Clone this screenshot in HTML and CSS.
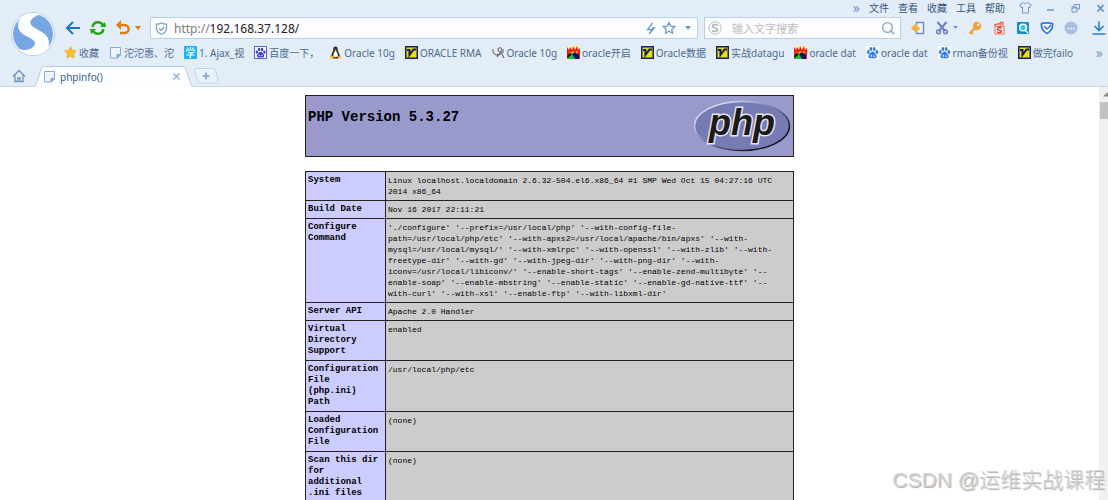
FILE: index.html
```html
<!DOCTYPE html>
<html lang="zh">
<head>
    <meta charset="UTF-8">
    <title>phpinfo()</title>
    <link rel="stylesheet" href="styles.css">
</head>
<body>
<svg class="defs" width="0" height="0">
    <symbol id="doc" viewBox="0 0 13 13">
        <path d="M1.500 1.500h10v7.500l-3 3h-7z" fill="#eef4ff" stroke="#86aae0"/>
        <path d="M11.500 8.500h-3.500v3.500z" fill="#86aae0" stroke="#86aae0"/>
    </symbol>
    <symbol id="itv" viewBox="0 0 13 13">
        <path d="M0 0h13v13H0z" fill="#1b1b7a"/>
        <path d="M1.500 1.500h10v10h-10z" fill="#e3e30b"/>
        <path d="M2 4h2.500v5L8.500 3.500H11" fill="none" stroke="#1b1b5a" stroke-width="2"/>
    </symbol>
    <symbol id="flame" viewBox="0 0 13 13">
        <path d="M0 0h13v13H0z" fill="#fff3a0"/>
        <path d="M0 13V1l2 3 1-3 2 3 1-4 2 4 2-4 1 4 2-2v11z" fill="#f41a0c"/>
        <path d="M1 5l3 2 2-2 2 1 3-1-1 3H4z" fill="#ffd21c"/>
        <path d="M5 13V8l3-2 4 3v4z" fill="#10107a"/>
        <path d="M0 13l2-4 3-1 3 5z" fill="#18c52c"/>
        <path d="M0 10l3-3 2 1-4 4z" fill="#111"/>
    </symbol>
    <symbol id="paw" viewBox="0 0 13 13">
        <ellipse cx="2.300" cy="6" rx="1.400" ry="1.900"/>
        <ellipse cx="4.900" cy="2.900" rx="1.400" ry="2"/>
        <ellipse cx="8.300" cy="2.900" rx="1.400" ry="2"/>
        <ellipse cx="10.900" cy="6" rx="1.400" ry="1.900"/>
        <path d="M6.600 5.600c1.500 0 2 1.600 3.200 2.700 2 1.800.8 4.200-1.300 4-1.300-.2-2.500-.2-3.800 0-2.200.2-3.300-2.200-1.300-4C4.600 7.200 5.100 5.600 6.600 5.600z"/>
        <path d="M5.500 8.500v2h-1v-1h1M7.300 9v1.500h1.500V9" fill="none" stroke="#fff" stroke-width=".6"/>
    </symbol>
</svg>

<header class="browser">
    <div class="top">
        <svg class="logo" viewBox="0 0 46 46">
            <circle cx="23" cy="23" r="21.500" fill="#fff" stroke="#b9cee8"/>
            <circle cx="23" cy="23" r="20" fill="#76a7e4"/>
            <path d="M31 3C18 0 8 5 8 14c0 7 6 10 12 13 6 3 6 6 3 9-3 3-9 4-14 2 4 4 9 6 14 6 10 0 16-5 16-12 0-8-7-11-14-15-5-3-6-6-3-9 2-2 5-4 9-5z" fill="#fff"/>
        </svg>
        <div class="bars">
            <nav class="menu">
                <a href="#" class="more">»</a>
                <a href="#">文件</a>
                <a href="#">查看</a>
                <a href="#">收藏</a>
                <a href="#">工具</a>
                <a href="#">帮助</a>
                <div class="window">
                    <button aria-label="皮肤"><svg viewBox="0 0 13 13"><path d="M4.500 1.500L1 3.500l1 3 1.500-.5v6h6V6l1.500.5 1-3-3.500-2c-1 1.500-3 1.500-4 0z" fill="none" stroke="#7196bf"/></svg></button>
                    <button aria-label="最小化"><svg viewBox="0 0 13 13"><path d="M3 9h7" stroke="#7196bf" stroke-width="1.500"/></svg></button>
                    <button aria-label="还原"><svg viewBox="0 0 13 13"><path d="M3 6h5v5H3zM5 6V3.500h5.500V8H8M3 7h5" fill="none" stroke="#7196bf"/></svg></button>
                    <button aria-label="关闭"><svg viewBox="0 0 13 13"><path d="M3.500 4l6 6.500m0-6.500l-6 6.500" stroke="#5f86b3" stroke-width="1.500"/></svg></button>
                </div>
            </nav>
            <div class="address-row">
                <div class="nav-buttons">
                    <button aria-label="后退"><svg viewBox="0 0 16 16"><path d="M15 8H2.500M8 2L2 8l6 6" fill="none" stroke="#2274c0" stroke-width="2"/></svg></button>
                    <button aria-label="刷新"><svg viewBox="0 0 16 16"><path d="M2.500 7c.5-3 3-4.700 5.500-4.700 2 0 4 1 5 3M13.500 9c-.5 3-3 4.700-5.500 4.700-2 0-4-1-5-3" fill="none" stroke="#24a30f" stroke-width="2.400"/><path d="M10 7h6l-1-5zM6 9H0l1 5z" fill="#24a30f"/></svg></button>
                    <button aria-label="撤销"><svg viewBox="0 0 16 16"><path d="M3 5h6.500c5.500 0 5.500 8 0 8H5" fill="none" stroke="#e27b0a" stroke-width="2.400"/><path d="M1 5l5-5v10z" fill="#e27b0a"/></svg></button>
                    <svg class="caret" viewBox="0 0 6 4"><path d="M0 0h6L3 4z" fill="#e27b0a"/></svg>
                </div>
                <div class="address">
                    <svg class="shield" viewBox="0 0 13 13"><path d="M6.500 1C8 2 10 2.200 11.500 2.200v4.300c0 3-2.500 4.800-5 5.800-2.500-1-5-2.800-5-5.800V2.200C3 2.200 5 2 6.500 1z" fill="none" stroke="#7d9fca" stroke-width="1.200"/><path d="M4 6.300l2 2L9.200 5" fill="none" stroke="#6b92c4" stroke-width="1.200"/></svg>
                    <label for="url">http://</label>
                    <input id="url" type="text" value="192.168.37.128/">
                    <button aria-label="极速"><svg viewBox="0 0 13 13"><path d="M8.500 1L3.500 7.500h5L5 12M8 6h2.500L5 12" fill="none" stroke="#6f99ce" stroke-width="1.300"/></svg></button>
                    <button class="star" aria-label="加入收藏"><svg viewBox="0 0 14 14"><path d="M7 1.500l1.700 3.600 4 .5-2.900 2.700.7 4L7 10.300l-3.500 2 .7-4L1.300 5.600l4-.5z" fill="none" stroke="#6f99ce" stroke-width="1.300"/></svg></button>
                    <svg class="caret" viewBox="0 0 6 4"><path d="M0 0h6L3 4z" fill="#6f99ce"/></svg>
                </div>
                <div class="search">
                    <svg viewBox="0 0 14 14"><circle cx="7" cy="7" r="6.200" fill="none" stroke="#bcbcbc"/><path d="M9.800 4.200C7.500 3 4.500 3.500 4.500 5.200c0 2 5 1.600 5 3.600 0 1.800-3 2-5.300.8" fill="none" stroke="#b5b5b5" stroke-width="1.800"/></svg>
                    <input type="text" placeholder="输入文字搜索" aria-label="搜索">
                    <button aria-label="搜索"><svg viewBox="0 0 13 13"><circle cx="6" cy="6" r="4.500" fill="none" stroke="#8aa8cd" stroke-width="1.300"/><path d="M9.300 9.300l2.700 3" stroke="#8aa8cd" stroke-width="1.500"/></svg></button>
                </div>
                <div class="tools">
                    <button aria-label="手机"><svg viewBox="0 0 14 14"><path d="M5.500 1.500h7v11h-7z" fill="#eef4fc" stroke="#6e8fbf" stroke-width="1.500"/><path d="M3 4l3-1v3h2.500v3H6v3L0 7.500z" fill="#f6b13c"/></svg></button>
                    <button class="cut" aria-label="截图"><svg viewBox="0 0 14 14"><path d="M2.500 1l7.500 9M11.500 1L4 10" stroke="#6c7fc4" stroke-width="2"/><circle cx="3.500" cy="10.800" r="1.900" fill="none" stroke="#6c7fc4" stroke-width="1.500"/><circle cx="10.500" cy="10.800" r="1.900" fill="none" stroke="#6c7fc4" stroke-width="1.500"/></svg><svg class="caret" viewBox="0 0 6 4"><path d="M1 0h5L3.500 3z" fill="#6f99ce"/></svg></button>
                    <button aria-label="密码"><svg viewBox="0 0 14 14"><path d="M7 7l-5.500 5.500M3 11l2 2" stroke="#f0a23a" stroke-width="2.400"/><circle cx="9" cy="5" r="4.200" fill="#f0a23a"/><circle cx="10.300" cy="3.800" r="1.200" fill="#fff"/></svg></button>
                    <button aria-label="购物"><svg viewBox="0 0 14 14"><path d="M3 5.500h9v7.500H3z" fill="#fff" stroke="#f36450"/><path d="M2 4l6-1.500M8.500 4.500V1.500h2.500v3" fill="none" stroke="#f36450" stroke-width="1.400"/><path d="M9.500 7C7 6 5.500 6.500 5.500 8s4 1 4 2.500c0 1.300-2.500 1.300-4.500.5" fill="none" stroke="#ea3a28" stroke-width="1.400"/></svg></button>
                    <button aria-label="识图"><svg viewBox="0 0 14 14"><rect x="1" y="1" width="12" height="12" rx="1" fill="#148ed0"/><circle cx="7" cy="6.500" r="3.300" fill="#39c0ee" stroke="#fff" stroke-width="1.500"/><path d="M9 9l3 3" stroke="#fff" stroke-width="1.500"/></svg></button>
                    <button aria-label="安全"><svg viewBox="0 0 14 14"><path d="M1.500 2.500c4-1 7-1 11 0 .5 5-2 8-5.500 10-3.500-2-6-5-5.500-10z" fill="#fff" stroke="#2876ee" stroke-width="1.700"/><path d="M4 5l3 3 4-4" fill="none" stroke="#2876ee" stroke-width="1.500"/></svg></button>
                    <button aria-label="更多"><svg viewBox="0 0 14 14"><circle cx="7" cy="7" r="6.500" fill="#a5bfe0"/><path d="M3.500 7.500H5m1.300 0h1.500m1.200 0h1.500" stroke="#fff" stroke-width="1.400"/></svg></button>
                    <button class="download" aria-label="下载"><svg viewBox="0 0 14 14"><path d="M7 .500V9M2.500 5L7 9.500 11.500 5M.500 13h13" fill="none" stroke="#2a80cc" stroke-width="1.600"/></svg></button>
                </div>
            </div>
            <nav class="bookmarks">
                <a href="#"><svg viewBox="0 0 13 13"><path d="M6.500.800l1.800 3.700 4 .5-3 2.900.8 4.100-3.600-2L2.900 12l.8-4.100L.700 5l4-.5z" fill="#fcc22c" stroke="#e9a11b" stroke-width=".8"/></svg>收藏</a>
                <a href="#"><svg><use href="#doc"/></svg>沱沱惠、沱</a>
                <a href="#"><svg viewBox="0 0 13 13"><path d="M0 0h13v13H0z" fill="#1cb5f5"/><path d="M2.500 5.500V4h8v1.500M3.500 1.500l1 1.500M6.500 1v2M9.500 1.500l-1 1.500M4 6.500h5L6.500 8v3.500H5M2.500 9h8" fill="none" stroke="#fff" stroke-width="1.100"/></svg>1. Ajax_视</a>
                <a href="#"><svg class="boxed" viewBox="-1 -1 15 15"><path d="M-.5-.5h14v14h-14z" fill="#fff" stroke="#3336d6"/><use href="#paw" width="13" height="13"/></svg>百度一下，</a>
                <a href="#"><svg viewBox="0 0 13 13"><path d="M6.500.500c2 0 2.300 1.500 2.300 3.500 0 2 2 3.500 2 6l-2 2.500H4L2.200 10c0-2.500 2-4 2-6 0-2 .3-3.500 2.300-3.500z" fill="#2b2b2b"/><path d="M6.500 4.500c1.500 1.500 2.500 3.500 2.300 5.500-.3 1.500-4 1.500-4.500 0-.3-2 1.200-4 2.200-5.500z" fill="#fff"/><path d="M1.200 9.500l3 .5.800 2-1 1-3-1zM8.500 10.500l3-1 .8 2-2.800 1.500zM5 3.500h3L6.500 5z" fill="#f5b81b"/></svg>Oracle 10g</a>
                <a href="#"><svg><use href="#itv"/></svg>ORACLE RMA</a>
                <a href="#"><svg viewBox="0 0 13 13"><path d="M1 3c-1 5 4 8 7 4 3-4 1-6-1-5s-1 4 2 4l3 6M9 8c-2 0-3 1-4 3M11 3v4" fill="none" stroke="#666" stroke-width="1.100"/></svg>Oracle 10g</a>
                <a href="#"><svg><use href="#flame"/></svg>oracle开启</a>
                <a href="#"><svg><use href="#itv"/></svg>Oracle数据</a>
                <a href="#"><svg><use href="#itv"/></svg>实战datagu</a>
                <a href="#"><svg><use href="#flame"/></svg>oracle dat</a>
                <a href="#"><svg class="paw"><use href="#paw"/></svg>oracle dat</a>
                <a href="#"><svg class="paw"><use href="#paw"/></svg>rman备份视</a>
                <a href="#"><svg><use href="#itv"/></svg>做完failo</a>
                <a href="#" class="more">»</a>
            </nav>
        </div>
    </div>
    <div class="tabs">
        <button class="home" aria-label="主页"><svg viewBox="0 0 14 14"><path d="M1 7.500L7 1.500l6 6M3 6.500v6h3V9h2v3.500h3v-6" fill="none" stroke="#6b8fbd" stroke-width="1.300"/></svg></button>
        <div class="tab">
            <svg class="shape" viewBox="0 0 160 21" preserveAspectRatio="none"><path d="M0 20.500c3 0 3-2 4-5L8 3.500C9 1 10 .500 12 .500h137c2 0 3 .5 4 3l4 12c1 3 1 5 3 5V21H0z" fill="#fcfdff"/><path d="M0 20.500c3 0 3-2 4-5L8 3.500C9 1 10 .500 12 .500h137c2 0 3 .5 4 3l4 12c1 3 1 5 3 5" fill="none" stroke="#b4cae4"/></svg>
            <svg class="icon"><use href="#doc"/></svg>
            <span>phpinfo()</span>
            <button aria-label="关闭标签"><svg viewBox="0 0 9 9"><path d="M1.500 1.500l6 6m0-6l-6 6" stroke="#8fb0d8" stroke-width="1.400"/></svg></button>
        </div>
        <button class="add" aria-label="新标签"><svg viewBox="0 0 26 16"><path d="M3.500.500h16c2 0 2.500 1 3 2.500l2.500 9c.5 2 0 3-2 3H8c-2 0-3-.5-3.500-2.500L1.500 3c-.5-1.500 0-2.500 2-2.500z" fill="#e9f1fa" stroke="#c0d2e8"/><path d="M9.500 8h7M13 4.500v7" stroke="#7e9fc9" stroke-width="1.600"/></svg></button>
    </div>
</header>

<div class="view">
    <main class="content">
        <div class="head">
            <h1>PHP Version 5.3.27</h1>
            <svg class="php" viewBox="0 0 98 52">
                <defs>
                    <linearGradient id="rim" x1="0" y1="0" x2="1" y2="1">
                        <stop offset="0.200" stop-color="#d5d6ee"/>
                        <stop offset="0.500" stop-color="#6c70a8"/>
                        <stop offset="0.800" stop-color="#15151f"/>
                    </linearGradient>
                </defs>
                <ellipse cx="49" cy="26" rx="47.500" ry="24.500" fill="#777bb3" stroke="url(#rim)" stroke-width="1.500"/>
                <text x="16" y="35">php</text>
            </svg>
        </div>
        <table>
            <tr><th>System</th><td>Linux localhost.localdomain 2.6.32-504.el6.x86_64 #1 SMP Wed Oct 15 04:27:16 UTC<br>2014 x86_64</td></tr>
            <tr><th>Build Date</th><td>Nov 16 2017 22:11:21</td></tr>
            <tr><th>Configure<br>Command</th><td>'./configure' '--prefix=/usr/local/php' '--with-config-file-<br>path=/usr/local/php/etc' '--with-apxs2=/usr/local/apache/bin/apxs' '--with-<br>mysql=/usr/local/mysql/' '--with-xmlrpc' '--with-openssl' '--with-zlib' '--with-<br>freetype-dir' '--with-gd' '--with-jpeg-dir' '--with-png-dir' '--with-<br>iconv=/usr/local/libiconv/' '--enable-short-tags' '--enable-zend-multibyte' '--<br>enable-soap' '--enable-mbstring' '--enable-static' '--enable-gd-native-ttf' '--<br>with-curl' '--with-xsl' '--enable-ftp' '--with-libxml-dir'</td></tr>
            <tr><th>Server API</th><td>Apache 2.0 Handler</td></tr>
            <tr><th>Virtual<br>Directory<br>Support</th><td>enabled</td></tr>
            <tr><th>Configuration<br>File<br>(php.ini)<br>Path</th><td>/usr/local/php/etc</td></tr>
            <tr><th>Loaded<br>Configuration<br>File</th><td>(none)</td></tr>
            <tr><th>Scan this dir<br>for<br>additional<br>.ini files</th><td>(none)</td></tr>
        </table>
    </main>
    <div class="scrollbar">
        <svg viewBox="0 0 9 14"><path d="M3 9h6V6L7 5z" fill="#8a8a8a"/></svg>
        <div class="thumb"></div>
    </div>
</div>
<div class="watermark">CSDN @运维实战课程</div>
</body>
</html>
```
FILE: styles.css
```css
* {
    margin: 0;
    padding: 0;
    box-sizing: border-box;
}

body {
    height: 100vh;
    display: flex;
    flex-direction: column;
    overflow: hidden;
    background: #fff;
    font-family: "Noto Sans", "Noto Sans CJK SC", sans-serif;
    font-size: 10px;
    color: #4b6a8e;
}

a {
    color: inherit;
    text-decoration: none;
}

button {
    display: flex;
    align-items: center;
    border: none;
    background: none;
}

svg {
    display: block;
    flex: none;
}

input {
    min-width: 0;
    flex: 1;
    border: none;
    outline: none;
    background: none;
    font-family: inherit;
}

.defs {
    position: absolute;
}

/* browser chrome */
.browser {
    flex: none;
    background: #e3edf8;
    border-bottom: 1px solid #c4d7ec;
}

.top {
    display: flex;
    height: 66px;
}

.logo {
    width: 46px;
    height: 46px;
    margin: 11px 8px 0 10px;
}

.bars {
    flex: 1;
    min-width: 0;
}

.menu {
    display: flex;
    justify-content: flex-end;
    align-items: center;
    gap: 9px;
    height: 15px;
    padding-right: 1px;
    color: #35557a;
}

.more {
    color: #7196bf;
    font-size: 14px;
    line-height: 14px;
}

.window {
    display: flex;
    gap: 12px;
    margin-left: 5px;
}

.window svg {
    width: 13px;
    height: 13px;
}

.address-row {
    display: flex;
    height: 22px;
    margin-top: 2px;
}

.nav-buttons {
    display: flex;
    align-items: center;
    gap: 9px;
    width: 86px;
    padding-left: 1px;
}

.nav-buttons svg {
    width: 16px;
    height: 16px;
}

.address,
.search {
    display: flex;
    align-items: center;
    background: #fcfdff;
    border: 1px solid #b9d0e8;
}

.address {
    flex: 1;
    padding: 0 6px 0 4px;
    margin-right: 6px;
    font-size: 12px;
}

.address svg {
    width: 13px;
    height: 13px;
}

.address label {
    margin-left: 6px;
    color: #7c7c7c;
}

.address input {
    font-size: 12px;
    color: #222;
}

.address .star {
    margin: 0 9px 0 5px;
}

.address .star svg {
    width: 14px;
    height: 14px;
}

.search {
    width: 197px;
    padding: 0 5px 0 3px;
}

.search svg {
    width: 14px;
    height: 14px;
}

.search input {
    margin-left: 10px;
    font-size: 11px;
}

.search input::placeholder {
    color: #bcbcbc;
}

.tools {
    display: flex;
    align-items: center;
    gap: 10px;
    padding: 0 2px 0 10px;
}

.tools svg {
    width: 14px;
    height: 14px;
}

.tools .cut {
    gap: 3px;
}

.tools .download {
    margin-left: 4px;
}

.address-row .caret {
    width: 6px;
    height: 4px;
}

.nav-buttons .caret {
    margin-left: -5px;
}

.bookmarks {
    display: flex;
    align-items: center;
    gap: 10px;
    height: 27px;
    padding-right: 5px;
    white-space: nowrap;
}

.bookmarks a {
    display: flex;
    align-items: center;
    gap: 2px;
}

.bookmarks svg {
    width: 13px;
    height: 13px;
}

.bookmarks .boxed {
    fill: #3336d6;
}

.bookmarks .paw {
    fill: #2a78ee;
    background: #fff;
}

.bookmarks .more {
    margin-left: auto;
}

/* tab strip */
.tabs {
    display: flex;
    height: 20px;
}

.home {
    width: 33px;
    padding-left: 12px;
}

.home svg {
    width: 14px;
    height: 14px;
}

.tab {
    position: relative;
    display: flex;
    align-items: center;
    width: 160px;
    height: 21px;
    padding: 0 12px 0 10px;
    color: #35638f;
}

.tab > * {
    position: relative;
}

.tab .shape {
    position: absolute;
    left: 0;
    top: 0;
    width: 100%;
    height: 100%;
}

.tab .icon {
    width: 13px;
    height: 13px;
    margin-right: 4px;
}

.tab span {
    flex: 1;
}

.tab button svg {
    width: 9px;
    height: 9px;
}

.add svg {
    width: 26px;
    height: 16px;
}

/* page */
.view {
    flex: 1;
    min-height: 0;
    display: flex;
}

.content {
    flex: 1;
    padding-top: 8px;
    overflow: hidden;
    color: #000;
    font-family: "Liberation Mono", "Noto Sans CJK SC", monospace;
}

.head {
    display: flex;
    justify-content: space-between;
    width: 489px;
    height: 62px;
    margin: 0 auto 14px;
    padding: 4px 2px 0;
    background: #9999cc;
    border: 1px solid #222;
}

.head h1 {
    padding-top: 9px;
    font-size: 14px;
    line-height: 16px;
}

.php {
    width: 98px;
    height: 52px;
}

.php text {
    font: italic bold 36px "Liberation Sans", sans-serif;
    fill: #1c1a1b;
    stroke: #e6e6ee;
    stroke-width: 3px;
    paint-order: stroke;
}

table {
    width: 489px;
    margin: 0 auto;
    border-collapse: collapse;
    table-layout: fixed;
    white-space: nowrap;
}

th,
td {
    padding: 3px 2px;
    border: 1px solid #222;
    font-size: 8px;
    line-height: 11px;
    text-align: left;
    vertical-align: top;
}

th {
    width: 80px;
    background: #ccccff;
    font-size: 9px;
}

td {
    background: #cccccc;
}

.scrollbar {
    width: 9px;
    padding-left: 1px;
    background: #f0f0f0;
}

.scrollbar svg {
    width: 9px;
    height: 15px;
}

.thumb {
    height: 17px;
    background: #c1c1c1;
}

.watermark {
    position: absolute;
    right: 3px;
    bottom: 6px;
    color: #d4d4d4;
    font-family: "Liberation Sans", "Noto Sans CJK SC", sans-serif;
    font-size: 21px;
    font-weight: 300;
    line-height: 28px;
    text-shadow: 1px 1px 1px #aaa;
}
```
